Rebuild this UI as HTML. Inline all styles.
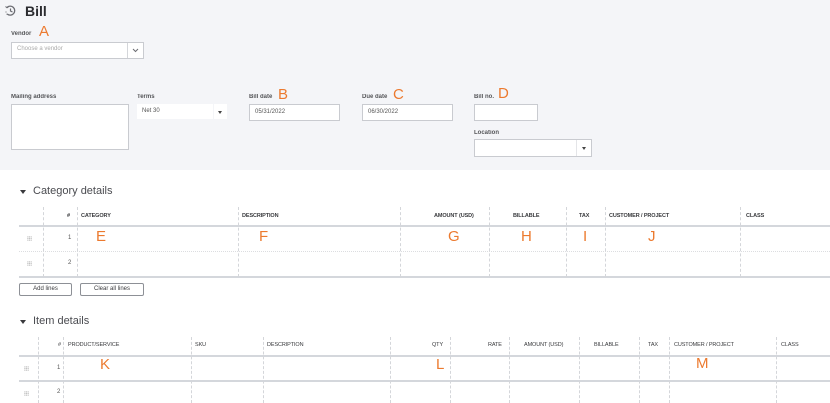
<!DOCTYPE html>
<html><head><meta charset="utf-8"><style>
*{margin:0;padding:0;box-sizing:border-box}
body{width:830px;height:403px;overflow:hidden;background:#fff;font-family:"Liberation Sans",sans-serif;position:relative;color:#393a3d}
.a{position:absolute}
.top{left:0;top:0;width:830px;height:170px;background:#f4f5f8}
.lbl{font-size:6px;color:#393a3d;font-weight:bold;opacity:.85}
.box{background:#fff;border:1px solid #c9cbd0}
.v{font-size:6px;color:#555}
.o{color:#ec7a2f;font-size:15px;line-height:15px}
.vl{width:0;border-left:1px dashed #d4d6da}
.th{font-size:5.5px;color:#393a3d;font-weight:bold;letter-spacing:-.1px}
.ti{font-size:5.5px;color:#393a3d;letter-spacing:-.1px}
.btn{border:1px solid #8d9096;border-radius:2px;font-size:6px;text-align:center;line-height:11px;background:#fff}
.g{width:5px;height:5px;background-image:radial-gradient(circle,#bbb 0.6px,transparent 0.7px);background-size:1.7px 1.7px}
</style></head><body>
<div class="a top"></div>
<svg class="a" style="left:4px;top:4px" width="13" height="13" viewBox="0 0 13 13"><path d="M3 3.5A4.5 4.5 0 1 1 3.2 10" fill="none" stroke="#6b6c72" stroke-width="1.3"/><path d="M1.5 2.5L3 3.8 4.5 2.8" fill="none" stroke="#6b6c72" stroke-width="1"/><path d="M6.5 4.5V7L8.5 8" fill="none" stroke="#6b6c72" stroke-width="1.2"/><path d="M2 7.5v1M2.6 9.8l.6.6" stroke="#6b6c72" stroke-width="1"/></svg>
<div class="a" style="left:25px;top:3px;font-size:14px;font-weight:bold;color:#2b2c30">Bill</div>
<div class="a lbl" style="left:11px;top:31px">Vendor</div><div class="a o" style="left:39px;top:24px">A</div>
<div class="a box" style="left:11px;top:42px;width:133px;height:17px"></div>
<div class="a" style="left:127px;top:43px;width:1px;height:15px;background:#d4d6da"></div>
<div class="a v" style="left:17px;top:46px;color:#aaa">Choose a vendor</div>
<svg class="a" style="left:132px;top:48px" width="7" height="5"><path d="M1 1l2.5 2.5L6 1" fill="none" stroke="#6b6c72" stroke-width="1"/></svg>
<div class="a lbl" style="left:11px;top:94px">Mailing address</div>
<div class="a box" style="left:11px;top:104px;width:118px;height:46px"></div>
<div class="a lbl" style="left:137px;top:94px">Terms</div>
<div class="a" style="left:137px;top:104px;width:76px;height:15px;background:#fff"></div>
<div class="a" style="left:214px;top:104px;width:13px;height:15px;background:#fff"></div>
<div class="a v" style="left:142px;top:108px">Net 30</div>
<div class="a" style="left:218px;top:111px;border:2.5px solid transparent;border-top:3px solid #444"></div>
<div class="a lbl" style="left:249px;top:94px">Bill date</div><div class="a o" style="left:278px;top:87px">B</div>
<div class="a box" style="left:249px;top:104px;width:91px;height:17px"></div><div class="a v" style="left:255px;top:109px">05/31/2022</div>
<div class="a lbl" style="left:362px;top:94px">Due date</div><div class="a o" style="left:393px;top:87px">C</div>
<div class="a box" style="left:362px;top:104px;width:91px;height:17px"></div><div class="a v" style="left:368px;top:109px">06/30/2022</div>
<div class="a lbl" style="left:474px;top:94px">Bill no.</div><div class="a o" style="left:498px;top:86px">D</div>
<div class="a box" style="left:474px;top:104px;width:64px;height:17px"></div>
<div class="a lbl" style="left:474px;top:130px">Location</div>
<div class="a box" style="left:474px;top:139px;width:118px;height:18px"></div>
<div class="a" style="left:576px;top:140px;width:1px;height:16px;background:#e4e5e8"></div>
<div class="a" style="left:582px;top:147px;border:2.5px solid transparent;border-top:3px solid #444"></div>

<div class="a" style="left:20px;top:190px;border:3px solid transparent;border-top:4px solid #393a3d"></div>
<div class="a" style="left:33px;top:185px;font-size:11px;color:#4a4b50">Category details</div>
<div class="a" style="left:19px;top:225px;width:811px;height:2px;background:#d4d7dc"></div>
<div class="a" style="left:19px;top:251px;width:811px;border-top:1px dotted #dcdde0"></div>
<div class="a" style="left:19px;top:276px;width:811px;height:2px;background:#d4d7dc"></div>
<div class="a vl" style="left:43px;top:207px;height:70px"></div>
<div class="a vl" style="left:77px;top:207px;height:70px"></div>
<div class="a vl" style="left:238px;top:207px;height:70px"></div>
<div class="a vl" style="left:400px;top:207px;height:70px"></div>
<div class="a vl" style="left:489px;top:207px;height:70px"></div>
<div class="a vl" style="left:566px;top:207px;height:70px"></div>
<div class="a vl" style="left:605px;top:207px;height:70px"></div>
<div class="a vl" style="left:740px;top:207px;height:70px"></div>
<div class="a th" style="left:67px;top:213px">#</div>
<div class="a th" style="left:81px;top:213px">CATEGORY</div>
<div class="a th" style="left:242px;top:213px">DESCRIPTION</div>
<div class="a th" style="left:434px;top:213px">AMOUNT (USD)</div>
<div class="a th" style="left:513px;top:213px">BILLABLE</div>
<div class="a th" style="left:579px;top:213px">TAX</div>
<div class="a th" style="left:609px;top:213px">CUSTOMER / PROJECT</div>
<div class="a th" style="left:746px;top:213px">CLASS</div>
<div class="a g" style="left:27px;top:236px"></div>
<div class="a g" style="left:27px;top:261px"></div>
<div class="a v" style="left:68px;top:235px">1</div><div class="a v" style="left:68px;top:260px">2</div>
<div class="a o" style="left:96px;top:229px">E</div>
<div class="a o" style="left:259px;top:229px">F</div>
<div class="a o" style="left:448px;top:229px">G</div>
<div class="a o" style="left:521px;top:229px">H</div>
<div class="a o" style="left:583px;top:229px">I</div>
<div class="a o" style="left:648px;top:229px">J</div>
<div class="a btn" style="left:19px;top:283px;width:53px;height:13px">Add lines</div>
<div class="a btn" style="left:80px;top:283px;width:64px;height:13px">Clear all lines</div>

<div class="a" style="left:20px;top:320px;border:3px solid transparent;border-top:4px solid #393a3d"></div>
<div class="a" style="left:33px;top:315px;font-size:11px;color:#4a4b50">Item details</div>
<div class="a" style="left:19px;top:355px;width:811px;height:2px;background:#d4d7dc"></div>
<div class="a" style="left:19px;top:380px;width:811px;height:2px;background:#d4d7dc"></div>
<div class="a vl" style="left:38px;top:337px;height:66px"></div>
<div class="a vl" style="left:63px;top:337px;height:66px"></div>
<div class="a vl" style="left:191px;top:337px;height:66px"></div>
<div class="a vl" style="left:263px;top:337px;height:66px"></div>
<div class="a vl" style="left:390px;top:337px;height:66px"></div>
<div class="a vl" style="left:450px;top:337px;height:66px"></div>
<div class="a vl" style="left:509px;top:337px;height:66px"></div>
<div class="a vl" style="left:579px;top:337px;height:66px"></div>
<div class="a vl" style="left:639px;top:337px;height:66px"></div>
<div class="a vl" style="left:669px;top:337px;height:66px"></div>
<div class="a vl" style="left:776px;top:337px;height:66px"></div>
<div class="a ti" style="left:58px;top:342px">#</div>
<div class="a ti" style="left:68px;top:342px">PRODUCT/SERVICE</div>
<div class="a ti" style="left:195px;top:342px">SKU</div>
<div class="a ti" style="left:267px;top:342px">DESCRIPTION</div>
<div class="a ti" style="left:432px;top:342px">QTY</div>
<div class="a ti" style="left:488px;top:342px">RATE</div>
<div class="a ti" style="left:524px;top:342px">AMOUNT (USD)</div>
<div class="a ti" style="left:594px;top:342px">BILLABLE</div>
<div class="a ti" style="left:648px;top:342px">TAX</div>
<div class="a ti" style="left:674px;top:342px">CUSTOMER / PROJECT</div>
<div class="a ti" style="left:781px;top:342px">CLASS</div>
<div class="a g" style="left:24px;top:366px"></div>
<div class="a g" style="left:24px;top:391px"></div>
<div class="a v" style="left:57px;top:365px">1</div><div class="a v" style="left:57px;top:389px">2</div>
<div class="a o" style="left:100px;top:357px">K</div>
<div class="a o" style="left:436px;top:357px">L</div>
<div class="a o" style="left:696px;top:356px">M</div>
</body></html>
